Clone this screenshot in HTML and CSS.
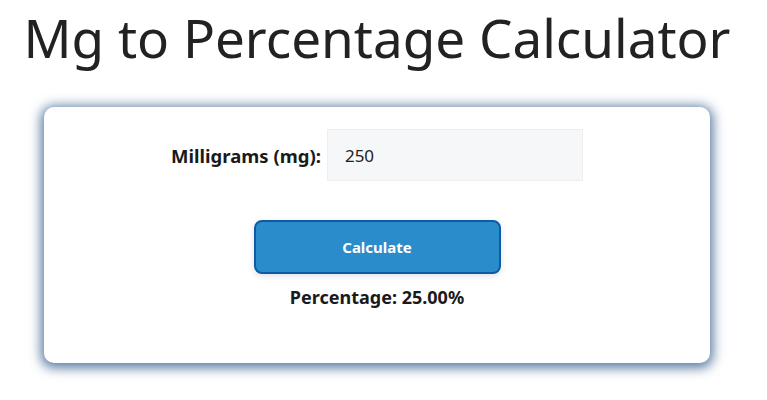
FILE: index.html
```html
<!DOCTYPE html>
<html>
<head>
    <meta charset="UTF-8">
    <meta name="viewport" content="width=device-width, initial-scale=1.0">
    <title>Mg to Percentage Calculator</title>
    <link rel="stylesheet" href="styles.css">
</head>
<body>
    <h1>Mg to Percentage Calculator</h1>
    <div class="calculator">
        <div class="field">
            <label for="mg">Milligrams (mg):</label>
            <input type="number" id="mg" value="250">
        </div>
        <button type="button" onclick="calculate()">Calculate</button>
        <div id="result" class="result">Percentage: 25.00%</div>
    </div>

    <script>
        function calculate() {
            const mg = parseFloat(document.getElementById('mg').value);
            const result = document.getElementById('result');
            if (isNaN(mg)) {
                result.textContent = 'Please enter a valid number';
                return;
            }
            // 1000 mg = 100%
            const percent = (mg / 1000) * 100;
            result.textContent = `Percentage: ${percent.toFixed(2)}%`;
        }
    </script>
</body>
</html>
```

FILE: styles.css
```css
body {
    margin: 0;
    padding: 0 13px 40px 0;
    font-family: "Noto Sans", "Open Sans", sans-serif;
    color: #222;
    background: #fff;
}
h1 {
    margin: 3px 0 0;
    font-size: 53px;
    font-weight: 400;
    line-height: 70px;
    text-align: center;
    color: #222;
}
.calculator {
    width: 666px;
    height: 256px;
    box-sizing: border-box;
    margin: 34px auto 0;
    padding: 22px 0 0;
    background: #fff;
    border-radius: 10px;
    box-shadow: 0 2px 12px 3px rgba(50, 90, 140, 0.8);
    display: flex;
    flex-direction: column;
    align-items: center;
}
.field {
    display: flex;
    align-items: center;
    gap: 6px;
}
.field label {
    font-weight: 700;
    font-size: 18.5px;
    color: #1a1a1a;
}
.field input {
    width: 256px;
    height: 52px;
    box-sizing: border-box;
    padding: 0 17px;
    border: 1px solid #eceef0;
    background: #f6f7f9;
    font-family: inherit;
    font-size: 17px;
    color: #222;
    outline: none;
    -moz-appearance: textfield;
}
.field input::-webkit-inner-spin-button,
.field input::-webkit-outer-spin-button {
    -webkit-appearance: none;
    margin: 0;
}
button {
    margin-top: 39px;
    width: 247px;
    height: 54px;
    background: #2b8ccb;
    border: 2px solid #0f5aa5;
    border-radius: 8px;
    color: #fff;
    font-family: inherit;
    font-weight: 700;
    font-size: 15px;
    cursor: pointer;
    box-shadow: 0 2px 6px rgba(0, 0, 0, 0.12);
}
button:hover {
    background: #2680bb;
}
.result {
    margin-top: 11px;
    font-weight: 700;
    font-size: 18px;
    color: #1a1a1a;
}
```
